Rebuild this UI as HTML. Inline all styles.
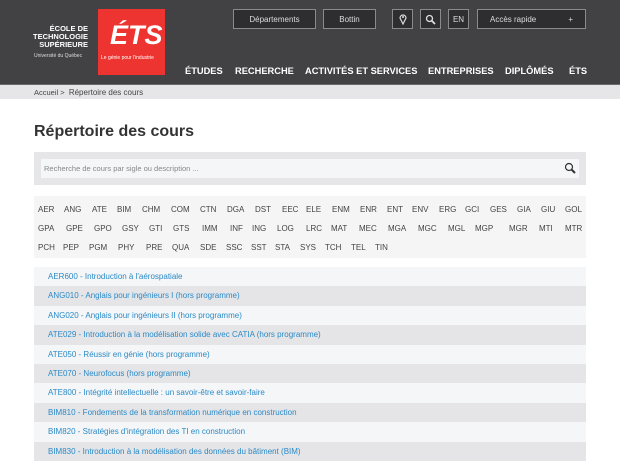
<!DOCTYPE html>
<html><head><meta charset="utf-8"><style>
*{margin:0;padding:0;box-sizing:border-box}
body{width:620px;height:466px;overflow:hidden;background:#fff;font-family:"Liberation Sans",sans-serif;position:relative}
.hd{position:absolute;left:0;top:0;width:620px;height:85px;background:#424244;border-bottom:1px solid #6a6a6c}
.a{position:absolute}
.btn{position:absolute;top:9px;height:20px;border:1px solid #8a8a8c;background:#2e2e30;color:#ddd;font-size:8px;display:flex;align-items:center;justify-content:center}
.nav{position:absolute;top:66px;color:#fff;font-weight:bold;font-size:9.3px;white-space:nowrap}
.bc{position:absolute;top:85px;left:0;width:620px;height:14px;background:#e6e6e8;font-size:7.5px;color:#444;padding:3px 0 0 34px}
h1{position:absolute;left:34px;top:123px;font-size:16px;color:#333;font-weight:bold}
.sb{position:absolute;left:34px;top:152px;width:552px;height:33px;background:#e6e6e8}
.si{position:absolute;left:7px;top:7px;width:538px;height:19px;background:#f4f6f7;font-size:7.5px;color:#888;padding:5px 0 0 3px}
.grid{position:absolute;left:34px;top:196px;width:552px;height:62px;background:#f5f5f6}
.c{position:absolute;font-size:8px;color:#444}
.row{position:absolute;left:34px;width:552px;height:19.4px;font-size:8px;color:#2a8ac8;padding:5px 0 0 14px}
</style></head><body>
<div class="hd"></div>
<div class="a" style="right:532px;top:25px;color:#fff;font-weight:bold;font-size:7.5px;line-height:8px;text-align:right;left:0">ÉCOLE DE<br>TECHNOLOGIE<br>SUPÉRIEURE</div>
<div class="a" style="left:34px;top:53px;color:#ddd;font-size:5px">Université du Québec</div>
<div class="a" style="left:98px;top:9px;width:67px;height:66px;background:#ee3431"></div>
<div class="a" style="left:110px;top:20px;color:#fff;font-weight:bold;font-style:italic;font-size:27px">ÉTS</div>
<div class="a" style="left:101px;top:55px;color:#fff;font-size:5px">Le génie pour l'industrie</div>
<div class="btn" style="left:233px;width:83px">Départements</div>
<div class="btn" style="left:323px;width:53px">Bottin</div>
<div class="btn" style="left:392px;width:21px"><svg width="10" height="12" viewBox="0 0 10 12"><path d="M5 11 L2 5 A3 3 0 1 1 8 5 Z" fill="none" stroke="#ddd" stroke-width="1.2"/><circle cx="5" cy="4" r="1" fill="#ddd"/></svg></div>
<div class="btn" style="left:420px;width:21px"><svg width="11" height="11" viewBox="0 0 11 11"><circle cx="4.5" cy="4.5" r="3" fill="none" stroke="#ddd" stroke-width="1.3"/><path d="M6.5 6.5 L10 10" stroke="#ddd" stroke-width="1.8"/></svg></div>
<div class="btn" style="left:448px;width:21px">EN</div>
<div class="btn" style="left:477px;width:109px;justify-content:flex-start;padding-left:12px">Accès rapide<span style="position:absolute;right:12px">+</span></div>
<div class="nav" style="left:185px">ÉTUDES</div>
<div class="nav" style="left:235px">RECHERCHE</div>
<div class="nav" style="left:305px">ACTIVITÉS ET SERVICES</div>
<div class="nav" style="left:428px">ENTREPRISES</div>
<div class="nav" style="left:505px">DIPLÔMÉS</div>
<div class="nav" style="left:569px">ÉTS</div>
<div class="bc">Accueil &gt;&nbsp; <span style="font-size:8px">Répertoire des cours</span></div>
<h1>Répertoire des cours</h1>
<div class="sb"><div class="si">Recherche de cours par sigle ou description ...</div>
<svg class="a" style="left:530px;top:10px" width="12" height="12" viewBox="0 0 12 12"><circle cx="5" cy="5" r="3.5" fill="none" stroke="#333" stroke-width="1.2"/><path d="M7.5 7.5 L11 11" stroke="#333" stroke-width="2"/></svg></div>
<div class="grid"></div>
<div id="codes"></div>
<script>
var r=[["AER","ANG","ATE","BIM","CHM","COM","CTN","DGA","DST","EEC","ELE","ENM","ENR","ENT","ENV","ERG","GCI","GES","GIA","GIU","GOL"],
["GPA","GPE","GPO","GSY","GTI","GTS","IMM","INF","ING","LOG","LRC","MAT","MEC","MGA","MGC","MGL","MGP","MGR","MTI","MTR"],
["PCH","PEP","PGM","PHY","PRE","QUA","SDE","SSC","SST","STA","SYS","TCH","TEL","TIN"]];
var xs=[[38,64,92,117,142,171,200,227,255,282,306,332,360,387,412,439,465,490,517,541,565],
[38,66,94,122,149,173,202,230,252,277,306,331,359,388,418,448,475,509,539,565],
[38,63,89,118,146,172,200,226,251,275,300,325,351,375]];
var h="";r.forEach(function(row,i){row.forEach(function(c,j){h+='<div class="c" style="left:'+xs[i][j]+'px;top:'+(205+i*19)+'px">'+c+'</div>'})});
var L=["AER600 - Introduction à l'aérospatiale","ANG010 - Anglais pour ingénieurs I (hors programme)","ANG020 - Anglais pour ingénieurs II (hors programme)","ATE029 - Introduction à la modélisation solide avec CATIA (hors programme)","ATE050 - Réussir en génie (hors programme)","ATE070 - Neurofocus (hors programme)","ATE800 - Intégrité intellectuelle : un savoir-être et savoir-faire","BIM810 - Fondements de la transformation numérique en construction","BIM820 - Stratégies d'intégration des TI en construction","BIM830 - Introduction à la modélisation des données du bâtiment (BIM)"];
L.forEach(function(t,i){h+='<div class="row" style="top:'+(267+i*19.4)+'px;background:'+(i%2?'#e5e5e7':'#f4f6f7')+'">'+t+'</div>'});
document.getElementById("codes").innerHTML=h;
</script>
</body></html>
